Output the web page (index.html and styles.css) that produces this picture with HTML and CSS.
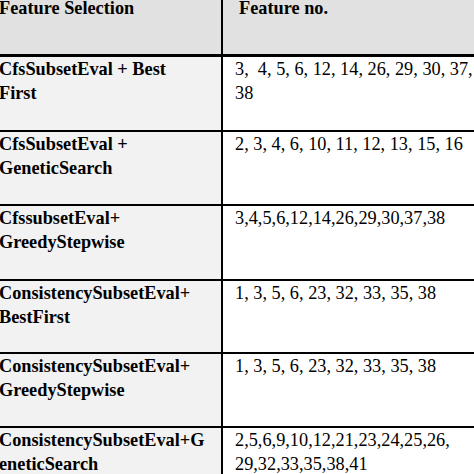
FILE: index.html
```html
<!DOCTYPE html>
<html>
<head>
<meta charset="utf-8">
<link rel="stylesheet" href="styles.css">
</head>
<body>
<table class="tbl">
  <tr class="head">
    <th class="c-left">Feature Selection</th>
    <th class="c-right">Feature no.</th>
  </tr>
  <tr class="r1">
    <td class="c-left">CfsSubsetEval + Best<br>First</td>
    <td class="c-right">3,&nbsp; 4, 5, 6, 12, 14, 26, 29, 30, 37,<br>38</td>
  </tr>
  <tr class="r2">
    <td class="c-left">CfsSubsetEval +<br>GeneticSearch</td>
    <td class="c-right">2, 3, 4, 6, 10, 11, 12, 13, 15, 16</td>
  </tr>
  <tr class="r3">
    <td class="c-left">CfssubsetEval+<br>GreedyStepwise</td>
    <td class="c-right">3,4,5,6,12,14,26,29,30,37,38</td>
  </tr>
  <tr class="r4">
    <td class="c-left">ConsistencySubsetEval+<br>BestFirst</td>
    <td class="c-right">1, 3, 5, 6, 23, 32, 33, 35, 38</td>
  </tr>
  <tr class="r5">
    <td class="c-left">ConsistencySubsetEval+<br>GreedyStepwise</td>
    <td class="c-right">1, 3, 5, 6, 23, 32, 33, 35, 38</td>
  </tr>
  <tr class="r6">
    <td class="c-left">ConsistencySubsetEval+G<br>eneticSearch</td>
    <td class="c-right">2,5,6,9,10,12,21,23,24,25,26,<br>29,32,33,35,38,41</td>
  </tr>
</table>
</body>
</html>
```
FILE: styles.css
```css
html, body {
  margin: 0;
  padding: 0;
  background: #ffffff;
  overflow: hidden;
  width: 474px;
  height: 474px;
}

.tbl {
  border-collapse: separate;
  border-spacing: 0;
  margin-left: -1px;
  margin-top: -4px;
  width: 520px;
  table-layout: fixed;
  font-family: "Liberation Serif", "Times New Roman", serif;
  font-size: 18.3px;
  line-height: 24px;
  color: #000;
}

.tbl th, .tbl td {
  vertical-align: top;
  text-align: left;
  white-space: nowrap;
  padding: 0;
  border-bottom: 2px solid #000;
  box-sizing: content-box;
}

.c-left {
  width: 222px;
  border-right: 2px solid #000;
  font-weight: bold;
  background: #f2f2f2;
}

.c-right {
  padding-left: 12px !important;
  font-weight: normal;
  background: #ffffff;
}

.head th {
  height: 58px;
  background: #e1e1e1;
  font-weight: bold;
  border-bottom: 3px solid #000;
}

.head .c-right {
  padding-left: 16px !important;
}

.r1 td { height: 73px; }
.r2 td { height: 72px; }
.r3 td { height: 73px; }
.r4 td { height: 71px; }
.r5 td { height: 72px; }
.r6 td { height: 72px; }
```
